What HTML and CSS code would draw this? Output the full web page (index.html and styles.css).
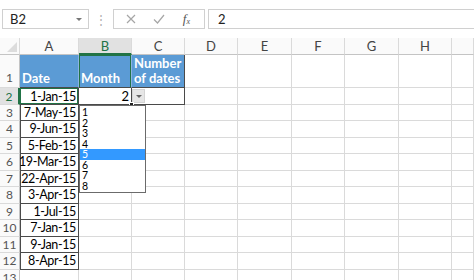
FILE: index.html
```html
<!DOCTYPE html>
<html lang="en">
<head>
  <meta charset="UTF-8">
  <title>Month dropdown</title>
  <link rel="stylesheet" href="styles.css">
</head>
<body>
  <div class="formula-bar">
    <div class="name-box"><span>B2</span><span class="caret"></span></div>
    <div class="grip">&#8942;</div>
    <div class="fx-box">
      <svg class="icon" width="10" height="10" viewBox="0 0 10 10"><path d="M1 1 9 9M9 1 1 9" stroke="#a6a6a6" stroke-width="1.2" fill="none"/></svg>
      <svg class="icon" width="12" height="10" viewBox="0 0 12 10"><path d="M1 5.5 4.5 9 11 1" stroke="#a6a6a6" stroke-width="1.2" fill="none"/></svg>
      <span class="fx">f<sub>x</sub></span>
    </div>
    <div class="formula-input">2</div>
  </div>

  <div class="sheet">
    <div class="row head">
      <div class="corner"></div>
      <div>A</div><div class="active">B</div><div>C</div><div>D</div>
      <div>E</div><div>F</div><div>G</div><div>H</div><div></div>
    </div>
    <div class="row tall">
      <div class="rh">1</div>
      <div class="hdr">Date</div>
      <div class="hdr sel">Month</div>
      <div class="hdr wrap">Number of dates</div>
      <div></div><div></div><div></div><div></div><div></div><div></div>
    </div>
    <div class="row">
      <div class="rh active">2</div>
      <div class="date current">1-Jan-15</div>
      <div class="num boxed">2<span class="drop-btn"></span><span class="handle"></span></div>
      <div class="boxed"></div>
      <div></div><div></div><div></div><div></div><div></div><div></div>
    </div>
    <div class="row"><div class="rh">3</div><div class="date">7-May-15</div><div></div><div></div><div></div><div></div><div></div><div></div><div></div><div></div></div>
    <div class="row"><div class="rh">4</div><div class="date">9-Jun-15</div><div></div><div></div><div></div><div></div><div></div><div></div><div></div><div></div></div>
    <div class="row"><div class="rh">5</div><div class="date">5-Feb-15</div><div></div><div></div><div></div><div></div><div></div><div></div><div></div><div></div></div>
    <div class="row"><div class="rh">6</div><div class="date">19-Mar-15</div><div></div><div></div><div></div><div></div><div></div><div></div><div></div><div></div></div>
    <div class="row"><div class="rh">7</div><div class="date">22-Apr-15</div><div></div><div></div><div></div><div></div><div></div><div></div><div></div><div></div></div>
    <div class="row"><div class="rh">8</div><div class="date">3-Apr-15</div><div></div><div></div><div></div><div></div><div></div><div></div><div></div><div></div></div>
    <div class="row"><div class="rh">9</div><div class="date">1-Jul-15</div><div></div><div></div><div></div><div></div><div></div><div></div><div></div><div></div></div>
    <div class="row"><div class="rh">10</div><div class="date">7-Jan-15</div><div></div><div></div><div></div><div></div><div></div><div></div><div></div><div></div></div>
    <div class="row"><div class="rh">11</div><div class="date">9-Jan-15</div><div></div><div></div><div></div><div></div><div></div><div></div><div></div><div></div></div>
    <div class="row"><div class="rh">12</div><div class="date">8-Apr-15</div><div></div><div></div><div></div><div></div><div></div><div></div><div></div><div></div></div>
    <div class="row"><div class="rh">13</div><div></div><div></div><div></div><div></div><div></div><div></div><div></div><div></div><div></div></div>

    <ul class="dropdown">
      <li>1</li><li>2</li><li>3</li><li>4</li>
      <li class="picked">5</li><li>6</li><li>7</li><li>8</li>
    </ul>
  </div>
</body>
</html>
```

FILE: styles.css
```css
*, *::before, *::after {
  box-sizing: border-box;
}

:root {
  --cols: 20px 59px 53px 53px 53px 54px 53px 54px 53px 1fr;
  --grid: #dadada;
  --green: #217346;
}

body {
  margin: 0;
  background: #fff;
  color: #000;
  font-family: Lato, "Liberation Sans", sans-serif;
  overflow: hidden;
}

/* formula bar */

.formula-bar {
  display: flex;
  align-items: center;
  height: 20px;
  margin: 9px 0 9px 2px;
  font-size: 13px;
  color: #222;
}

.name-box {
  width: 87px;
  height: 20px;
  border: 1px solid #d0d0d0;
  display: flex;
  align-items: center;
  justify-content: space-between;
  padding: 0 6px 0 7px;
}

.caret {
  width: 0;
  height: 0;
  border-left: 3px solid transparent;
  border-right: 3px solid transparent;
  border-top: 3px solid #777;
}

.grip {
  width: 24px;
  text-align: center;
  color: #b0b0b0;
  font-size: 12px;
}

.fx-box {
  width: 92px;
  height: 20px;
  border: 1px solid #d0d0d0;
  display: flex;
  align-items: center;
  justify-content: space-between;
  padding: 0 14px 0 12px;
}

.fx {
  font-family: "Liberation Serif", serif;
  font-style: italic;
  font-size: 13px;
  color: #555;
}

.fx sub {
  font-size: 8px;
  vertical-align: -1px;
}

.formula-input {
  flex: 1;
  height: 20px;
  margin-left: 3px;
  border: 1px solid #d0d0d0;
  border-right: 0;
  padding-left: 9px;
  line-height: 18px;
}

/* sheet */

.sheet {
  position: relative;
}

.row {
  display: grid;
  grid-template-columns: var(--cols);
  height: 16.5px;
  font-size: 13px;
}

.row > div {
  position: relative;
  border-right: 1px solid var(--grid);
  border-bottom: 1px solid var(--grid);
  padding: 0 2px;
  white-space: nowrap;
  overflow: hidden;
  display: flex;
  align-items: center;
}

.row.head {
  height: 17px;
  color: #444;
}

.row.head > div {
  justify-content: center;
  border-bottom-color: #c4c4c4;
  background: #fafafa;
}

.row.head > div.active {
  background: #e1e1e1;
  color: var(--green);
  border-bottom: 2px solid var(--green);
}

.corner::after {
  content: '';
  position: absolute;
  right: 2px;
  bottom: 2px;
  border-left: 10px solid transparent;
  border-bottom: 10px solid #dcdcdc;
}

.row.tall {
  height: 33px;
}

.row > .rh {
  justify-content: center;
  padding: 0;
  font-size: 12px;
  color: #555;
  background: #fafafa;
  border-right-color: #c4c4c4;
}

.row > .rh.active {
  background: #e1e1e1;
  color: var(--green);
  border-right: 2px solid var(--green);
}

.row.tall > .rh {
  align-items: flex-end;
  padding-bottom: 2px;
}

.row > .hdr {
  background: #5b9bd5;
  color: #fff;
  font-weight: bold;
  align-items: flex-end;
  padding-bottom: 1px;
  border-right-color: #8db4e2;
  border-bottom-color: #4a4a4a;
}

.row > .hdr.wrap {
  white-space: normal;
  line-height: 15px;
  border-right-color: #4a4a4a;
}

.row > .hdr.sel {
  box-shadow: inset 1px 0 var(--green), inset -1px 0 var(--green), inset 0 1px var(--green);
}

.row > .date {
  justify-content: flex-end;
  padding: 0 2px 0 1px;
  font-size: 12.5px;
  letter-spacing: -0.35px;
  border-right-color: #4a4a4a;
  border-bottom-color: #4a4a4a;
  box-shadow: inset 1px 0 #4a4a4a;
}

.row > .date.current {
  box-shadow: inset 0 0 0 1px var(--green);
}

.row > .boxed {
  border-right-color: #4a4a4a;
  border-bottom-color: #4a4a4a;
}

.row > .num {
  justify-content: flex-end;
  padding-right: 2px;
  overflow: visible;
  z-index: 2;
}

.drop-btn {
  position: absolute;
  left: 53px;
  top: 1px;
  width: 13px;
  height: 14px;
  background: #e6e6e6;
  border: 1px solid #d4d4d4;
}

.drop-btn::after {
  content: '';
  position: absolute;
  left: 3px;
  top: 5px;
  border-left: 3px solid transparent;
  border-right: 3px solid transparent;
  border-top: 3px solid #666;
}

.handle {
  position: absolute;
  right: -3px;
  bottom: -3px;
  width: 5px;
  height: 5px;
  background: #222;
  border: 1px solid #fff;
}

/* validation list */

.dropdown {
  position: absolute;
  left: 79px;
  top: 67px;
  width: 67px;
  margin: 0;
  padding: 1px 0;
  list-style: none;
  background: #fff;
  border: 1px solid #6b6b6b;
  font-size: 10.5px;
  line-height: 10.5px;
  z-index: 3;
}

.dropdown li {
  padding-left: 2px;
}

.dropdown li.picked {
  background: #3399ff;
  color: #fff;
}
```
